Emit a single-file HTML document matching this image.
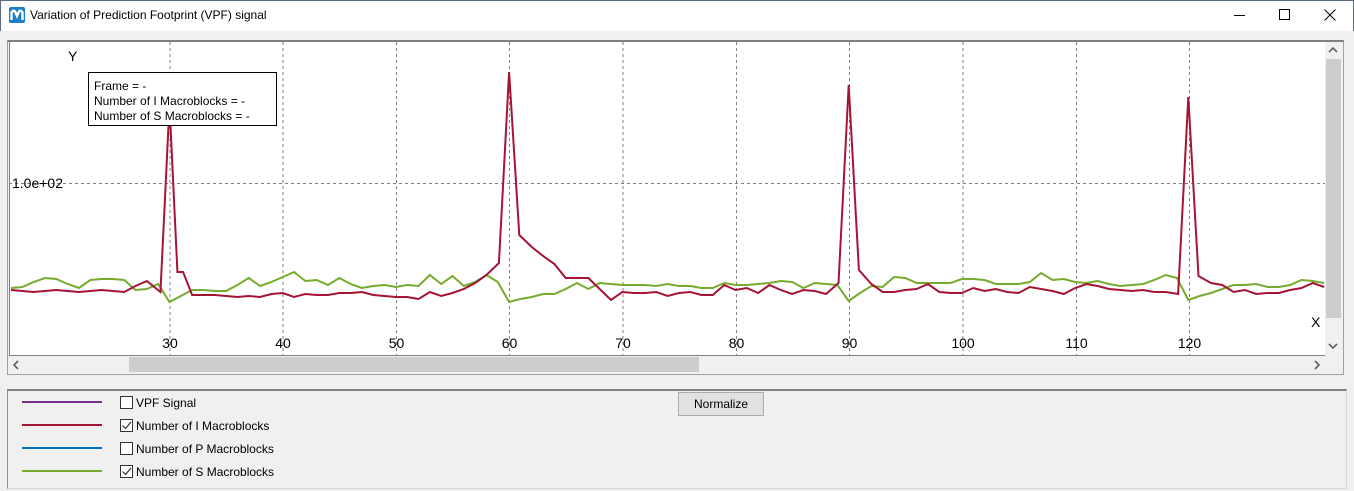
<!DOCTYPE html>
<html><head><meta charset="utf-8"><style>
*{margin:0;padding:0;box-sizing:border-box}
body{width:1354px;height:491px;background:#f0f0f0;font-family:"Liberation Sans",sans-serif;font-size:12px;color:#000;position:relative;overflow:hidden}
.abs{position:absolute}
.title{left:0;top:0;width:1354px;height:31px;background:#fff;border:1px solid #5a6a80;border-bottom:none}
.cb{position:absolute;left:120px;width:13px;height:13px;border:1px solid #333;background:#fff}
.lt{position:absolute;left:136px;font-size:12px}
.ll{position:absolute;left:22px;width:80px;height:2px}
</style></head><body>
<div class="abs title"></div>
<svg class="abs" style="left:9px;top:7px" width="16" height="16" viewBox="0 0 16 16"><rect width="16" height="16" rx="2" fill="#1a7fc8"/><path d="M2.5 13V5.5Q5 2 6.5 5.5L8 9L9.5 5.5Q11 2 13.5 5.5V13" stroke="#fff" stroke-width="2.4" fill="none"/></svg>
<div class="abs" style="left:30px;top:8px;font-size:12px">Variation of Prediction Footprint (VPF) signal</div>
<div class="abs" style="left:1234px;top:15px;width:11px;height:1px;background:#000"></div>
<div class="abs" style="left:1279px;top:9px;width:11px;height:11px;border:1px solid #000"></div>
<svg class="abs" style="left:1324px;top:9px" width="12" height="12"><path d="M0.5 0.5L11.5 11.5M11.5 0.5L0.5 11.5" stroke="#000" stroke-width="1"/></svg>
<div class="abs" style="left:7px;top:40px;width:1337px;height:335px;border:1px solid #a0a0a0;border-top:2px solid #808080;background:#f0f0f0"></div>
<svg class="abs" style="left:9px;top:42px" width="1316" height="314">
<rect width="1316" height="314" fill="#fff"/>
<g stroke="#808080" stroke-dasharray="3,3" stroke-width="1">
<path d="M161 0V314M274 0V314M387.5 0V314M500.5 0V314M614 0V314M727.5 0V314M840.5 0V314M954 0V314M1067.5 0V314M1180.5 0V314"/>
<path d="M0 141.5H1316"/>
</g>
<line x1="0" y1="313.5" x2="1316" y2="313.5" stroke="#808080"/>
<line x1="0.5" y1="0" x2="0.5" y2="314" stroke="#808080"/>
<g transform="translate(-179.1,-42) scale(11.32,1)" fill="none" stroke-width="2" stroke-linejoin="miter">
<polyline vector-effect="non-scaling-stroke" stroke="#77ab2d" points="16,288 17,287 18,282 19,278 20,279 21,284 22,288 23,280 24,279 25,279 26,280 27,290 28,289 29,284 30,302 31,296 32,290 33,290 34,291 35,291 36,285 37,278 38,286 39,282 40,277 41,272 42,281 43,280 44,285 45,278 46,284 47,288 48,286 49,285 50,287 51,285 52,286 53,275 54,284 55,276 56,286 57,282 58,275 59,282 60,302 61,299 62,297 63,294 64,294 65,289 66,283 67,289 68,283 69,284 70,285 71,285 72,285 73,286 74,284 75,286 76,286 77,288 78,288 79,283 80,285 81,285 82,284 83,283 84,281 85,282 86,288 87,283 88,284 89,285 90,301 91,293 92,286 93,287 94,277 95,278 96,283 97,283 98,283 99,283 100,279 101,279 102,280 103,284 104,284 105,284 106,282 107,273 108,280 109,279 110,282 111,283 112,281 113,284 114,286 115,285 116,284 117,280 118,275 119,278 120,300 121,296 122,293 123,289 124,285 125,285 126,284 127,287 128,287 129,285 130,280 131,281 132,283"/>
<polyline vector-effect="non-scaling-stroke" stroke="#a51435" points="16,290 17,291 18,292 19,291 20,290 21,291 22,292 23,291 24,290 25,291 26,292 27,286 28,281 29.2,292 30,105 30.7,272 31.2,272 32,295 33,295 34,295 35,296 36,297 37,296 38,297 39,294 40,293 41,297 42,294 43,295 44,295 45,293 46,293 47,292 48,295 49,296 50,297 51,297 52,299 53,292 54,296 55,293 56,289 57,283 58,275 59.1,263 60,72 60.9,235 62,247 63,256 64,264 65,278 66,278 67,278 68,289 69,300 70,292 71,293 72,293 73,292 74,296 75,293 76,292 77,295 78,295 79,285 80,290 81,288 82,293 83,285 84,290 85,294 86,290 87,291 88,294 89.1,283 90,85 90.9,270 92,284 93,292 94,292 95,290 96,289 97,284 98,292 99,293 100,293 101,288 102,291 103,289 104,292 105,293 106,287 107,289 108,291 109,294 110,288 111,284 112,286 113,289 114,290 115,291 116,290 117,292 118,292 119.1,294 120,97 120.9,276 122,283 123,285 124,292 125,290 126,294 127,293 128,293 129,290 130,288 131,283 132,287"/>
</g>
<g font-family="Liberation Sans" font-size="14" fill="#000">
<text x="59" y="19">Y</text>
<text x="3" y="146" font-size="14">1.0e+02</text>
<text x="1302" y="285" font-size="14">X</text>
<g text-anchor="middle" font-size="14">
<text x="161" y="306">30</text><text x="274" y="306">40</text><text x="387.5" y="306">50</text><text x="500.5" y="306">60</text><text x="614" y="306">70</text><text x="727.5" y="306">80</text><text x="840.5" y="306">90</text><text x="954" y="306">100</text><text x="1067.5" y="306">110</text><text x="1180.5" y="306">120</text>
</g>
</g>
</svg>
<div class="abs" style="left:88px;top:72px;width:189px;height:54px;border:1px solid #000;background:#fff;padding:6px 0 0 5px;line-height:15px;font-size:12px">Frame = -<br>Number of I Macroblocks = -<br>Number of S Macroblocks = -</div>
<div class="abs" style="left:1325px;top:42px;width:17px;height:314px;background:#f0f0f0"></div>
<div class="abs" style="left:1326px;top:59px;width:15px;height:259px;background:#cdcdcd"></div>
<svg class="abs" style="left:1328px;top:46px" width="10" height="8"><path d="M1 6L5 2L9 6" stroke="#606060" stroke-width="1.6" fill="none"/></svg>
<svg class="abs" style="left:1328px;top:342px" width="10" height="8"><path d="M1 2L5 6L9 2" stroke="#606060" stroke-width="1.6" fill="none"/></svg>
<div class="abs" style="left:129px;top:357px;width:570px;height:15px;background:#cdcdcd"></div>
<svg class="abs" style="left:12px;top:360px" width="8" height="10"><path d="M6 1L2 5L6 9" stroke="#606060" stroke-width="1.6" fill="none"/></svg>
<svg class="abs" style="left:1313px;top:360px" width="8" height="10"><path d="M2 1L6 5L2 9" stroke="#606060" stroke-width="1.6" fill="none"/></svg>
<div class="abs" style="left:7px;top:389px;width:1340px;height:100px;border:1px solid #d8d8d8;border-top:2px solid #808080;border-left:1px solid #909090"></div>
<div class="ll" style="top:401px;background:#7b2d8e"></div>
<div class="ll" style="top:424px;background:#a51435"></div>
<div class="ll" style="top:447px;background:#0072bd"></div>
<div class="ll" style="top:470px;background:#77ab2d"></div>
<div class="cb" style="top:396px"></div><div class="lt" style="top:396px">VPF Signal</div>
<div class="cb" style="top:419px"><svg width="11" height="11" style="display:block"><path d="M1.5 5.5L4.5 8.5L10 2" stroke="#333" stroke-width="1.2" fill="none"/></svg></div><div class="lt" style="top:419px">Number of I Macroblocks</div>
<div class="cb" style="top:442px"></div><div class="lt" style="top:442px">Number of P Macroblocks</div>
<div class="cb" style="top:465px"><svg width="11" height="11" style="display:block"><path d="M1.5 5.5L4.5 8.5L10 2" stroke="#333" stroke-width="1.2" fill="none"/></svg></div><div class="lt" style="top:465px">Number of S Macroblocks</div>
<div class="abs" style="left:678px;top:392px;width:86px;height:24px;border:1px solid #adadad;background:#e1e1e1;text-align:center;line-height:22px;font-size:12px">Normalize</div>
</body></html>
